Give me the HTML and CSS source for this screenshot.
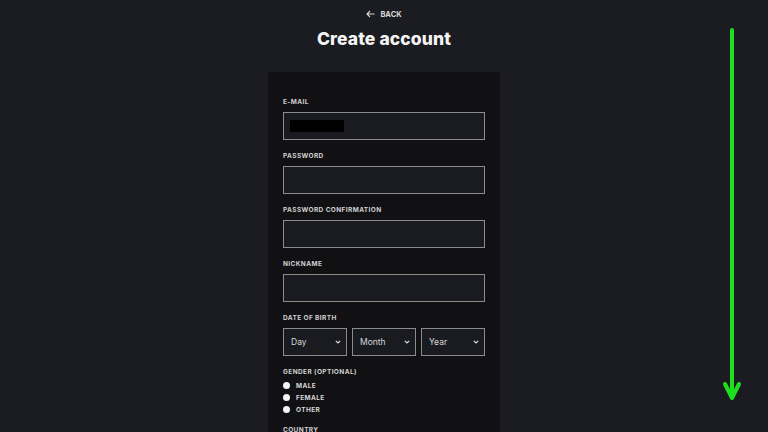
FILE: index.html
```html
<!DOCTYPE html>
<html>
<head>
<meta charset="utf-8">
<link rel="stylesheet" href="styles.css">
</head>
<body>
<div class="page">
  <a class="back"><svg width="9" height="8" viewBox="0 0 9 8"><path d="M8.5 4H1M4 1L1 4l3 3" fill="none" stroke="#d8d8d8" stroke-width="1.1"/></svg><span>BACK</span></a>
  <h1 class="title">Create account</h1>
  <div class="card">
    <div class="field">
      <label class="label">E-MAIL</label>
      <div class="input"><span class="redact"></span></div>
    </div>
    <div class="field">
      <label class="label">PASSWORD</label>
      <div class="input"></div>
    </div>
    <div class="field">
      <label class="label">PASSWORD CONFIRMATION</label>
      <div class="input"></div>
    </div>
    <div class="field">
      <label class="label">NICKNAME</label>
      <div class="input"></div>
    </div>
    <div class="field">
      <label class="label">DATE OF BIRTH</label>
      <div class="selects">
        <div class="select"><span>Day</span><svg width="6" height="4" viewBox="0 0 6 4"><path d="M0.8 0.8L3 3l2.2-2.2" fill="none" stroke="#ddd" stroke-width="1.2"/></svg></div>
        <div class="select"><span>Month</span><svg width="6" height="4" viewBox="0 0 6 4"><path d="M0.8 0.8L3 3l2.2-2.2" fill="none" stroke="#ddd" stroke-width="1.2"/></svg></div>
        <div class="select"><span>Year</span><svg width="6" height="4" viewBox="0 0 6 4"><path d="M0.8 0.8L3 3l2.2-2.2" fill="none" stroke="#ddd" stroke-width="1.2"/></svg></div>
      </div>
    </div>
    <div class="field">
      <label class="label">GENDER (OPTIONAL)</label>
      <div class="radios">
        <div class="radio"><span class="dot"></span><span>MALE</span></div>
        <div class="radio"><span class="dot"></span><span>FEMALE</span></div>
        <div class="radio"><span class="dot"></span><span>OTHER</span></div>
      </div>
    </div>
    <div class="field">
      <label class="label">COUNTRY</label>
    </div>
  </div>
</div>
<svg class="arrow" width="20" height="376" viewBox="0 0 20 376"><path d="M10 2V368" stroke="#1fe01f" stroke-width="4" stroke-linecap="round"/><path d="M3 356L10 370L17 356" fill="none" stroke="#1fe01f" stroke-width="4" stroke-linecap="round" stroke-linejoin="round"/></svg>
</body>
</html>
```
FILE: styles.css
```css
html, body {
  margin: 0;
  padding: 0;
  background: #1b1c21;
  height: 432px;
  overflow: hidden;
  font-family: Inter, "Liberation Sans", sans-serif;
  color: #e8e8e8;
}
.page {
  display: flex;
  flex-direction: column;
  align-items: center;
  padding-top: 9px;
}
.back {
  display: flex;
  align-items: center;
  gap: 5px;
  font-size: 7.5px;
  font-weight: 700;
  color: #d8d8d8;
  height: 10px;
}
.title {
  margin: 9px 0 0;
  font-size: 17.5px;
  font-weight: 800;
  color: #f4f4f4;
  letter-spacing: 0.1px;
  height: 22px;
  line-height: 22px;
}
.card {
  margin-top: 22px;
  width: 202px;
  background: #111113;
  padding: 26px 15px 0;
  display: flex;
  flex-direction: column;
  gap: 12px;
  height: 400px;
}
.field {
  display: flex;
  flex-direction: column;
  gap: 5px;
}
.label {
  font-size: 6.5px;
  font-weight: 700;
  letter-spacing: 0.4px;
  color: #d0d0d0;
  line-height: 9px;
}
.input {
  height: 26px;
  border: 1px solid #8c8c8c;
  background: #1a1b20;
  display: flex;
  align-items: center;
  padding-left: 6px;
}
.redact {
  display: block;
  width: 54px;
  height: 12px;
  background: #000;
}
.selects {
  display: flex;
  gap: 5px;
}
.select {
  flex: 1;
  height: 26px;
  border: 1px solid #8c8c8c;
  background: #1a1b20;
  display: flex;
  align-items: center;
  justify-content: space-between;
  padding: 0 5px 0 7px;
  font-size: 8.5px;
  color: #d8d8d8;
}
.radios {
  display: flex;
  flex-direction: column;
  gap: 3px;
  margin-top: -1px;
}
.radio {
  display: flex;
  align-items: center;
  gap: 6px;
  font-size: 6.5px;
  font-weight: 700;
  letter-spacing: 0.4px;
  color: #d8d8d8;
  height: 9px;
}
.dot {
  width: 7px;
  height: 7px;
  border-radius: 50%;
  background: #f4f4f4;
}
.arrow {
  position: absolute;
  left: 722px;
  top: 28px;
}
```
